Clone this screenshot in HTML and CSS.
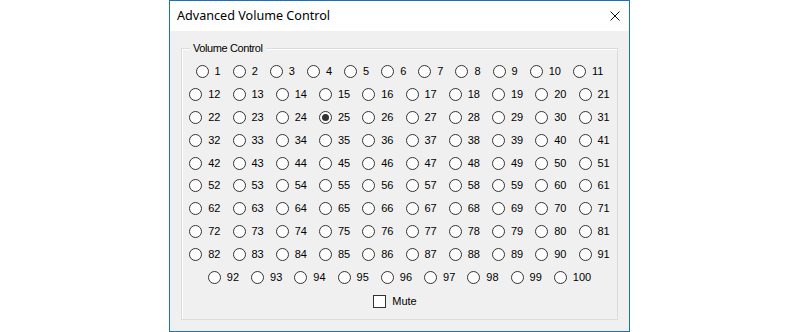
FILE: index.html
```html
<!DOCTYPE html>
<html>
<head>
<meta charset="utf-8">
<link rel="stylesheet" href="styles.css">
</head>
<body>
<div class="window">
  <div class="titlebar">
    <span class="title">Advanced Volume Control</span>
    <svg class="close" width="10" height="10" viewBox="0 0 10 10"><path d="M0.5 0.5 L9.5 9.5 M9.5 0.5 L0.5 9.5" stroke="#111" stroke-width="1" fill="none"/></svg>
  </div>
  <div class="client">
    <div class="group">
      <span class="legend">Volume Control</span>
      <div class="radios" id="radios"></div>
      <div class="mute-row">
        <label class="check"><span class="box"></span><span>Mute</span></label>
      </div>
    </div>
  </div>
</div>
<script>
  var c = document.getElementById('radios');
  var h = '';
  for (var i = 1; i <= 100; i++) {
    h += '<label class="radio' + (i === 25 ? ' on' : '') + '"><span class="dot"></span><span class="num">' + i + '</span></label>';
  }
  c.innerHTML = h;
</script>
</body>
</html>
```
FILE: styles.css
```css
html, body {
  margin: 0;
  padding: 0;
  background: #ffffff;
}
body {
  font-family: "Liberation Sans", Arial, sans-serif;
  font-size: 11px;
  color: #000;
}
.window {
  box-sizing: border-box;
  margin-left: 169px;
  width: 461px;
  height: 332px;
  border: 1px solid #1f6fbf;
  display: flex;
  flex-direction: column;
  background: #f0f0f0;
}
.titlebar {
  height: 30px;
  background: #ffffff;
  display: flex;
  align-items: center;
  justify-content: space-between;
  padding: 0 9px 0 7px;
  flex: none;
}
.title {
  font-family: "Noto Sans", "Liberation Sans", sans-serif;
  font-size: 12.6px;
  color: #000;
  margin-top: -1px;
}
.close {
  display: block;
  margin-top: -1px;
}
.client {
  flex: 1;
  display: flex;
  flex-direction: column;
  padding: 17px 11px 11px 11px;
}
.group {
  position: relative;
  flex: 1;
  border: 1px solid #dcdcdc;
  box-shadow: inset 1px 1px 0 #ffffff;
  padding-top: 11px;
  display: flex;
  flex-direction: column;
}
.legend {
  position: absolute;
  top: -8px;
  left: 8px;
  padding: 0 3px;
  background: #f0f0f0;
  letter-spacing: -0.4px;
  line-height: 14px;
}
.radios {
  display: flex;
  flex-wrap: wrap;
  justify-content: center;
}
.radio {
  display: flex;
  align-items: center;
  height: 22.9px;
  margin: 0 6px;
}
.dot {
  box-sizing: border-box;
  width: 13px;
  height: 13px;
  border: 1px solid #333333;
  border-radius: 50%;
  background: #ffffff;
  margin-right: 6px;
  display: flex;
  align-items: center;
  justify-content: center;
}
.radio.on .dot::after {
  content: "";
  width: 7px;
  height: 7px;
  border-radius: 50%;
  background: #333333;
}
.num {
  line-height: 13px;
}
.mute-row {
  display: flex;
  justify-content: center;
  margin-top: 6px;
}
.check {
  display: flex;
  align-items: center;
  height: 13px;
  padding-right: 9px;
}
.box {
  box-sizing: border-box;
  width: 13px;
  height: 13px;
  border: 1px solid #333333;
  background: #ffffff;
  margin-right: 6px;
}
```
